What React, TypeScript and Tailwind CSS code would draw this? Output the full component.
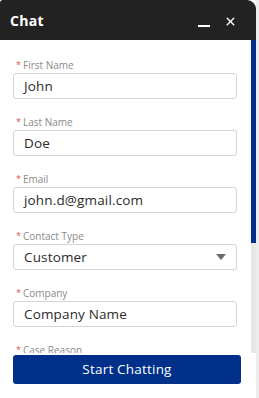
import { X } from "lucide-react";

type Field = {
  label: string;
  value: string;
  select?: boolean;
};

const fields: Field[] = [
  { label: "First Name", value: "John" },
  { label: "Last Name", value: "Doe" },
  { label: "Email", value: "john.d@gmail.com" },
  { label: "Contact Type", value: "Customer", select: true },
  { label: "Company", value: "Company Name" },
  { label: "Case Reason", value: "", select: true },
];

function FormField({ field }: { field: Field }) {
  return (
    <div className="mb-[5px]">
      <label className="flex items-center h-[13px] text-[10px] text-[#8a8a8a] leading-none pl-[3px]">
        <span className="text-[#d9534f] mr-[2px] text-[9px]">*</span>
        {field.label}
      </label>
      <div className="mt-[2px] h-[26px] border border-[#d4d4d4] rounded-[3px] bg-white flex items-center justify-between pl-[10px] pr-[9px] text-[13.5px] text-[#2b2b2b] tracking-[0.15px]">
        <span>{field.value}</span>
        {field.select && (
          <svg width="10" height="6" viewBox="0 0 10 6" className="mr-[1px]">
            <path d="M0 0h10L5 6z" fill="#6b6b6b" />
          </svg>
        )}
      </div>
      <div className="h-[11px]" />
    </div>
  );
}

export default function App() {
  return (
    <div
      className="w-[259px] h-[398px] bg-[#ececec] flex"
      style={{ fontFamily: '"Open Sans", "Liberation Sans", sans-serif' }}
    >
      <div className="w-[256px] h-full bg-white flex flex-col">
        <div className="h-[40px] shrink-0 bg-[#222222] rounded-tl-[3px] rounded-tr-[9px] flex items-center pl-[10px] pr-[19px]">
          <span className="text-white text-[14px] font-bold tracking-[0.3px]">Chat</span>
          <div className="ml-auto flex items-center gap-[14px] pt-[2px]">
            <div className="w-[12px] h-[2px] bg-white mt-[9px]" />
            <X className="w-[13px] h-[13px] text-white" strokeWidth={2.6} />
          </div>
        </div>

        <div className="h-[313px] shrink-0 flex">
          <div className="flex-1 overflow-hidden pl-[13px] pr-[14px] pt-[18px]">
            {fields.map(f => (
              <FormField key={f.label} field={f} />
            ))}
          </div>
          <div className="w-[5px] bg-[#e6e6e6]">
            <div className="h-[203px] bg-[#00308a]" />
          </div>
        </div>

        <div className="pl-[13px] pr-[15px] pt-[2px]">
          <button className="w-full h-[29px] bg-[#00308a] rounded-[3px] text-white text-[13.5px] font-medium tracking-[0.2px]">
            Start Chatting
          </button>
        </div>
      </div>
    </div>
  );
}
